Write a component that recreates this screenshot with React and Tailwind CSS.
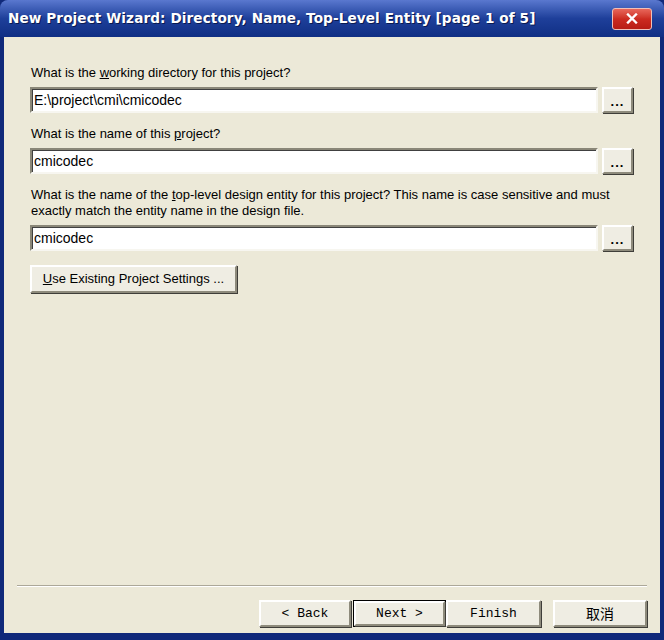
import React from "react";

const sans = { fontFamily: '"Liberation Sans", Arial, sans-serif' };

// sunken text box, classic 3D edge
const Field = ({ value }) => (
  <div className="flex-1 h-[26px] bg-white border-2 border-t-[#8a8778] border-l-[#8a8778] border-b-[#f7f6f0] border-r-[#f7f6f0] shadow-[inset_1px_1px_0_#404040] flex items-center pl-[2px] text-[14px] text-black">
    {value}
  </div>
);

const Raised = ({ className = "", children }) => (
  <div
    className={
      "bg-[#efede3] border-2 border-t-white border-l-white border-b-[#8e8b7c] border-r-[#8e8b7c] shadow-[1px_1px_0_#3f3e39] flex items-center justify-center " +
      className
    }
  >
    {children}
  </div>
);

const Browse = () => (
  <Raised className="w-[31px] h-[26px] ml-[4px]">
    <span className="text-[13px] font-bold leading-none tracking-[1px] pt-[3px]">...</span>
  </Raised>
);

const Row = ({ label, value }) => (
  <div className="flex flex-col">
    <div className="text-[13px] leading-[16px] text-black pl-[1px] mb-[6px]">{label}</div>
    <div className="flex items-center">
      <Field value={value} />
      <Browse />
    </div>
  </div>
);

const navBtn = "w-[92px] h-[27px] text-[13px] text-black";
const mono = { fontFamily: '"Liberation Mono", "Courier New", monospace' };

export default function App() {
  return (
    <div className="w-[664px] h-[640px] bg-[#10297a] flex flex-col" style={sans}>
      {/* title bar */}
      <div className="h-[37px] shrink-0 rounded-t-[8px] bg-gradient-to-b from-[#5a78cf] via-[#1e3f9a] to-[#102f84] flex items-center pl-[8px] pr-[12px]">
        <div className="flex-1 text-white font-bold tracking-[0.1px] [text-shadow:1px_1px_0_#0a1a50]" style={{ fontFamily: '"DejaVu Sans", "Liberation Sans", sans-serif', fontSize: "13.6px" }}>
          New Project Wizard: Directory, Name, Top-Level Entity [page 1 of 5]
        </div>
        <div className="w-[40px] h-[22px] rounded-[3px] border border-[#f0c0b8] bg-gradient-to-b from-[#e8665a] via-[#cc2b20] to-[#b81c14] flex items-center justify-center">
          <svg width="12" height="11" viewBox="0 0 12 11">
            <path d="M2 1.5 L10 9.5 M10 1.5 L2 9.5" stroke="white" strokeWidth="2.4" strokeLinecap="square" />
          </svg>
        </div>
      </div>

      {/* client area */}
      <div className="flex-1 mx-[4px] mb-[7px] bg-[#ece9d8] flex flex-col">
        <div className="flex flex-col pt-[28px] pl-[26px] pr-[27px] gap-[13px]">
          <Row
            label={<>What is the <u>w</u>orking directory for this project?</>}
            value="E:\project\cmi\cmicodec"
          />
          <Row label={<>What is the name of this <u>p</u>roject?</>} value="cmicodec" />
          <Row
            label={
              <>
                What is the name of the <u>t</u>op-level design entity for this project? This name is case sensitive and must exactly match the entity name in the design file.
              </>
            }
            value="cmicodec"
          />
          <Raised className="w-[207px] h-[28px] mt-[1px] text-[13px] text-black">
            <span><u>U</u>se Existing Project Settings ...</span>
          </Raised>
        </div>

        <div className="flex-1" />

        {/* etched separator */}
        <div className="mx-[13px] border-t border-t-[#aca899] border-b border-b-white" />

        <div className="flex justify-end pr-[13px] pt-[13px] pb-[6px]" style={mono}>
          <Raised className={navBtn}>&lt; Back</Raised>
          <div className="ml-[2px] border border-black">
            <Raised className="w-[91px] h-[25px] text-[13px] text-black">Next &gt;</Raised>
          </div>
          <Raised className={navBtn + " w-[95px]"}>Finish</Raised>
          <Raised className={navBtn + " ml-[12px] w-[94px]"}>
            <span style={{ fontFamily: '"Noto Sans CJK SC", sans-serif', fontSize: "14px" }}>取消</span>
          </Raised>
        </div>
      </div>
    </div>
  );
}
